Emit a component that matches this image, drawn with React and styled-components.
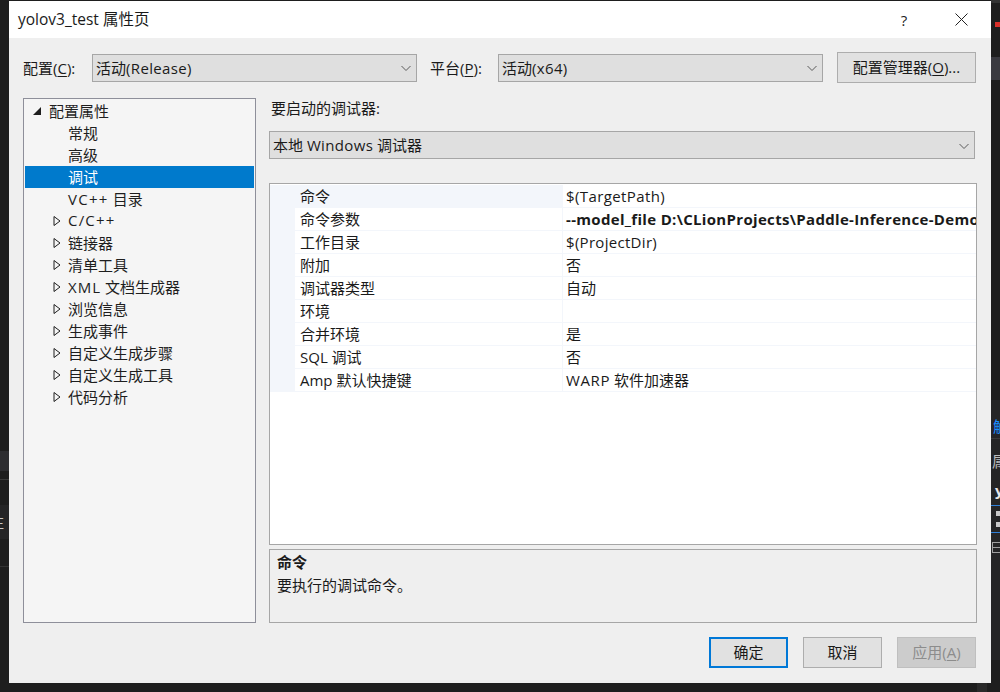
import React from 'react';
import styled, { createGlobalStyle } from 'styled-components';

const GlobalStyle = createGlobalStyle`
  html, body {
    margin: 0;
    padding: 0;
    background: #1e1e1e;
  }
`;

const FONT = `"Open Sans", "Noto Sans CJK SC", sans-serif`;

const Screen = styled.div`
  position: relative;
  width: 1000px;
  height: 692px;
  overflow: hidden;
  background: #1e1e1e;
  padding: 1px 9px 9px;
  box-sizing: border-box;
`;

// bits of the IDE showing behind the dialog
const BackBit = styled.div`
  position: absolute;
  left: ${p => p.x}px;
  top: ${p => p.y}px;
  width: ${p => p.w}px;
  height: ${p => p.h}px;
  background: ${p => p.color};
`;

const BackText = styled.span`
  position: absolute;
  left: ${p => p.x}px;
  top: ${p => p.y}px;
  font-family: ${FONT};
  font-size: 15px;
  line-height: 18px;
  font-weight: ${p => (p.bold ? 700 : 400)};
  color: ${p => p.color};
`;

const Dialog = styled.div`
  position: relative;
  height: 682px;
  background: #efefef;
  display: flex;
  flex-direction: column;
  font-family: ${FONT};
  font-size: 15px;
  color: #1a1a1a;
`;

const TitleBar = styled.div`
  height: 37px;
  flex: none;
  background: #fff;
  display: flex;
  align-items: center;
  padding-left: 9px;
`;

const Title = styled.div`
  flex: 1;
  font-size: 15.5px;
  padding-bottom: 2px;
`;

const TitleButton = styled.div`
  width: ${p => p.w}px;
  height: 37px;
  display: flex;
  align-items: center;
  justify-content: center;
  font-size: 15px;
  color: #222;
`;

const Body = styled.div`
  flex: 1;
  padding: 14px 15px 15px 14px;
  display: flex;
  flex-direction: column;
  min-height: 0;
`;

const TopRow = styled.div`
  display: flex;
  align-items: center;
  height: 31px;
`;

const FieldLabel = styled.label`
  width: ${p => p.w}px;
  flex: none;
  white-space: nowrap;
`;

const Combo = styled.div`
  width: ${p => p.w}px;
  height: 28px;
  flex: none;
  box-sizing: border-box;
  border: 1px solid #a6a6a6;
  background: #dfdfdf;
  display: flex;
  align-items: center;
  justify-content: space-between;
  padding: 0 3px 1px 3px;
  margin-right: ${p => p.mr || 0}px;
`;

const Chevron = styled.svg`
  width: 12px;
  height: 12px;
  margin: 2px 1px 0 0;
  flex: none;
`;

const Button = styled.button`
  width: ${p => p.w || 79}px;
  height: ${p => p.h || 31}px;
  box-sizing: border-box;
  padding: 0 0 2px;
  font-family: ${FONT};
  font-size: 15px;
  color: ${p => (p.disabled ? '#8c8c8c' : '#1a1a1a')};
  background: ${p => (p.disabled ? '#cccccc' : '#e1e1e1')};
  border-style: solid;
  border-color: ${p => (p.disabled ? '#bfbfbf' : p.$primary ? '#0078d7' : '#adadad')};
  border-width: ${p => (p.$primary ? 2 : 1)}px;
`;

const Main = styled.div`
  display: flex;
  margin-top: 15px;
  flex: none;
`;

const Tree = styled.div`
  width: 233px;
  height: 525px;
  box-sizing: border-box;
  border: 1px solid #8e8f9a;
  background: #f5f5f5;
  padding: 1px 1px 0;
  margin-right: 13px;
  flex: none;
`;

const TreeRow = styled.div`
  height: 22px;
  box-sizing: border-box;
  padding-bottom: 2px;
  display: flex;
  align-items: center;
  padding-left: ${p => (p.$root ? 7 : 43)}px;
  background: ${p => (p.$selected ? '#007acc' : 'transparent')};
  color: ${p => (p.$selected ? '#fff' : '#1e1e1e')};
  white-space: pre;
`;

const Arrow = styled.svg`
  width: 10px;
  height: 10px;
  flex: none;
  margin-left: ${p => (p.$solid ? 0 : -16)}px;
  margin-right: ${p => (p.$solid ? 7 : 6)}px;
  margin-top: 2px;
`;

const RightPane = styled.div`
  width: 708px;
  flex: none;
  display: flex;
  flex-direction: column;
`;

const SectionLabel = styled.div`
  height: 33px;
  padding: 0 0 0 2px;
  box-sizing: border-box;
  line-height: 20px;
`;

const Grid = styled.div`
  height: 362px;
  margin-top: 24px;
  box-sizing: border-box;
  border: 1px solid #a6a6a6;
  background: #fff;
  padding-top: 1px;
  overflow: hidden;
`;

const PropRow = styled.div`
  height: 23px;
  display: grid;
  grid-template-columns: 25px 268px 1fr;
  line-height: 22px;
  white-space: nowrap;
`;

const Gutter = styled.div`
  background: #f3f6fb;
`;

const PropName = styled.div`
  padding-left: 5px;
  background: ${p => (p.$active ? '#f3f6fb' : '#fff')};
  border-bottom: 1px solid #f3f6fb;
  border-right: 1px solid #f3f6fb;
  overflow: hidden;
`;

const PropValue = styled.div`
  padding-left: 3px;
  font-weight: ${p => (p.$bold ? 700 : 400)};
  border-bottom: 1px solid #f3f6fb;
  overflow: hidden;
`;

const Description = styled.div`
  height: 74px;
  margin-top: 4px;
  box-sizing: border-box;
  border: 1px solid #a6a6a6;
  padding: 1px 7px;
  line-height: 23px;
`;

const DescTitle = styled.div`
  font-weight: 700;
`;

const Footer = styled.div`
  display: flex;
  justify-content: flex-end;
  gap: 15px;
  margin-top: 14px;
`;

const Underline = styled.span`
  text-decoration: underline;
  text-underline-offset: 2px;
  text-decoration-thickness: 1px;
`;

// latin runs sit a little wider in the original UI font
const Latin = styled.span`
  letter-spacing: ${p => p.$gap || 0.35}px;
`;

const treeItems = [
  { label: '常规' },
  { label: '高级' },
  { label: '调试', selected: true },
  { label: 'VC++', rest: ' 目录', gap: 1.3 },
  { label: 'C/C++', gap: 1.2, closed: true },
  { label: '链接器', closed: true },
  { label: '清单工具', closed: true },
  { label: 'XML', rest: ' 文档生成器', gap: 1, closed: true },
  { label: '浏览信息', closed: true },
  { label: '生成事件', closed: true },
  { label: '自定义生成步骤', closed: true },
  { label: '自定义生成工具', closed: true },
  { label: '代码分析', closed: true },
];

const props = [
  { name: '命令', value: <Latin $gap={0.4}>$(TargetPath)</Latin>, active: true },
  { name: '命令参数', value: <Latin $gap={0.32}>--model_file D:\CLionProjects\Paddle-Inference-Demo\c++\yolov3\model</Latin>, bold: true },
  { name: '工作目录', value: <Latin $gap={0.3}>$(ProjectDir)</Latin> },
  { name: '附加', value: '否' },
  { name: '调试器类型', value: '自动' },
  { name: '环境', value: '' },
  { name: '合并环境', value: '是' },
  { name: 'SQL 调试', value: '否' },
  { name: 'Amp 默认快捷键', value: <><Latin $gap={0.6}>WARP</Latin> 软件加速器</> },
];

const ChevronIcon = () => (
  <Chevron viewBox="0 0 12 12">
    <path d="M1.5 4 L6 8.5 L10.5 4" fill="none" stroke="#5a5a5a" strokeWidth="1" />
  </Chevron>
);

const App = () => (
  <>
    <GlobalStyle />
    <Screen>
      <BackBit x={0} y={451} w={9} h={20} color="#2d2d30" />
      <BackBit x={0} y={479} w={9} h={1} color="#3a3a3a" />
      <BackBit x={0} y={505} w={9} h={34} color="#252526" />
      <BackBit x={0} y={566} w={9} h={1} color="#333333" />
      <BackText x={-11} y={513} color="#c8c8c8">注</BackText>
      <BackBit x={991} y={0} w={9} h={3} color="#333333" />
      <BackBit x={991} y={57} w={9} h={23} color="#3a3a40" />
      <BackBit x={995} y={22} w={5} h={5} color="#d9302a" />
      <BackBit x={991} y={400} w={9} h={260} color="#252526" />
      <BackBit x={991} y={438} w={9} h={1} color="#3a3a3a" />
      <BackBit x={991} y={505} w={9} h={1} color="#2f7fd6" />
      <BackBit x={991} y={532} w={9} h={1} color="#2f7fd6" />
      <BackBit x={996} y={511} w={4} h={5} color="#c8c8c8" />
      <BackBit x={996} y={522} w={4} h={5} color="#c8c8c8" />
      <BackBit x={992} y={542} w={8} h={1} color="#a0a0a0" />
      <BackBit x={992} y={547} w={8} h={1} color="#a0a0a0" />
      <BackBit x={992} y={552} w={8} h={1} color="#a0a0a0" />
      <BackBit x={992} y={542} w={1} h={11} color="#a0a0a0" />
      <BackBit x={977} y={683} w={10} h={9} color="#2a2a2a" />
      <BackText x={993} y={417} color="#1a8cff">触</BackText>
      <BackText x={992} y={452} color="#bbbbbb">属</BackText>
      <BackText x={995} y={481} color="#e8e8e8" bold>y</BackText>

      <Dialog>
        <TitleBar>
          <Title>yolov3_test 属性页</Title>
          <TitleButton w={54}>?</TitleButton>
          <TitleButton w={60}>
            <svg width="13" height="13" viewBox="0 0 13 13">
              <path d="M0.5 0.5 L12.5 12.5 M12.5 0.5 L0.5 12.5" stroke="#222" strokeWidth="1" fill="none" />
            </svg>
          </TitleButton>
        </TitleBar>
        <Body>
          <TopRow>
            <FieldLabel w={69}>配置(<Underline>C</Underline>):</FieldLabel>
            <Combo w={325} mr={13}>
              <span>活动<Latin>(Release)</Latin></span>
              <ChevronIcon />
            </Combo>
            <FieldLabel w={68}>平台(<Underline>P</Underline>):</FieldLabel>
            <Combo w={325} mr={14}>
              <span>活动<Latin>(x64)</Latin></span>
              <ChevronIcon />
            </Combo>
            <Button w={139} h={31}>配置管理器(<Underline>O</Underline>)...</Button>
          </TopRow>
          <Main>
            <Tree>
              <TreeRow $root>
                <Arrow viewBox="0 0 10 10" $solid>
                  <path d="M9 1 V9 H1 Z" fill="#1e1e1e" />
                </Arrow>
                配置属性
              </TreeRow>
              {treeItems.map(item => (
                <TreeRow key={item.label} $selected={item.selected}>
                  {item.closed && (
                    <Arrow viewBox="0 0 10 10">
                      <path d="M2 0.5 L8 5 L2 9.5 Z" fill="none" stroke="#1e1e1e" strokeWidth="1" />
                    </Arrow>
                  )}
                  <span>
                    {item.gap ? <Latin $gap={item.gap}>{item.label}</Latin> : item.label}
                    {item.rest}
                  </span>
                </TreeRow>
              ))}
            </Tree>
            <RightPane>
              <SectionLabel>要启动的调试器:</SectionLabel>
              <Combo w={706}>
                <span>本地 <Latin>Windows</Latin> 调试器</span>
                <ChevronIcon />
              </Combo>
              <Grid>
                {props.map(row => (
                  <PropRow key={row.name}>
                    <Gutter />
                    <PropName $active={row.active}>{row.name}</PropName>
                    <PropValue $bold={row.bold}>{row.value}</PropValue>
                  </PropRow>
                ))}
              </Grid>
              <Description>
                <DescTitle>命令</DescTitle>
                <div>要执行的调试命令。</div>
              </Description>
            </RightPane>
          </Main>
          <Footer>
            <Button $primary>确定</Button>
            <Button>取消</Button>
            <Button disabled>应用(<Underline>A</Underline>)</Button>
          </Footer>
        </Body>
      </Dialog>
    </Screen>
  </>
);

export default App;
